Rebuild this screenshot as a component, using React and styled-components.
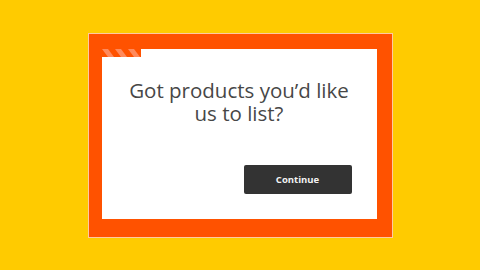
import styled, { createGlobalStyle } from 'styled-components';

const GlobalStyle = createGlobalStyle`
  html, body {
    margin: 0;
    padding: 0;
    background: #ffcb00;
  }
`

const Page = styled.div`
  width: 480px;
  height: 270px;
  display: flex;
  align-items: center;
  justify-content: center;
  font-family: "Open Sans", "Liberation Sans", sans-serif;
`

const Frame = styled.div`
  box-sizing: border-box;
  width: 303px;
  height: 203px;
  padding: 15px 15px 18px 13px;
  background: #ff5200;
  box-shadow: 0 0 0 1px #ffc9a0;
  display: flex;
`

const Card = styled.div`
  position: relative;
  flex: 1;
  background: #ffffff;
  display: flex;
  flex-direction: column;
  padding: 30px 25px 25px;
`

const Stripes = styled.svg`
  position: absolute;
  left: 0;
  top: 0;
`

const Question = styled.h2`
  margin: 0;
  font-size: 20.5px;
  line-height: 23px;
  font-weight: 400;
  color: #474747;
  text-align: center;
`

const Actions = styled.div`
  margin-top: auto;
  display: flex;
  justify-content: flex-end;
`

const ContinueButton = styled.button`
  width: 108px;
  height: 29px;
  border: none;
  border-radius: 2px;
  background: #333333;
  color: #f2f2f2;
  font-family: "Open Sans", "Liberation Sans", sans-serif;
  font-size: 9.5px;
  font-weight: 700;
  cursor: pointer;
`

const App = () => {
  return (
    <>
      <GlobalStyle />
      <Page>
        <Frame>
          <Card>
            <Stripes width="39" height="8" viewBox="0 0 39 8">
              <rect width="39" height="8" fill="#ff5200" />
              <polygon points="0,0 6,0 12,8 6,8" fill="#ff8a5c" />
              <polygon points="13,0 19,0 25,8 19,8" fill="#ff8a5c" />
              <polygon points="26,0 32,0 38,8 32,8" fill="#ff8a5c" />
            </Stripes>
            <Question>Got products you’d like<br />us to list?</Question>
            <Actions>
              <ContinueButton>Continue</ContinueButton>
            </Actions>
          </Card>
        </Frame>
      </Page>
    </>
  )
}

export default App;
